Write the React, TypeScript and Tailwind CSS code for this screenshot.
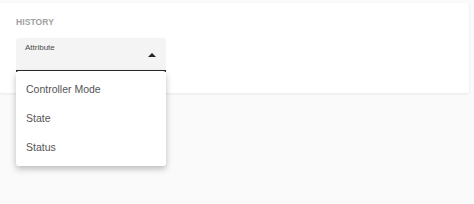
import React from "react";

const items = ["Controller Mode", "State", "Status"];

export default function App() {
  return (
    <div
      className="relative flex h-[204px] w-[474px] flex-col overflow-hidden bg-[#fafafa] pt-[3px]"
      style={{ fontFamily: "'Liberation Sans', Arial, sans-serif" }}
    >
      <div className="flex h-[90px] w-[469px] flex-col items-start gap-[11px] rounded-[2px] bg-white px-4 pt-[14px] shadow-[0_1px_3px_rgba(0,0,0,0.08)]">
        <div className="text-[8.5px] font-bold leading-[10px] tracking-[0.1px] text-[#a0a0a0]">HISTORY</div>
        <div className="flex h-[34px] w-[150px] items-start justify-between rounded-t-[3px] border-b-2 border-[#2b2b2b] bg-[#f4f4f4] pl-[9px] pr-[10px] pt-[5px]">
          <span className="text-[8px] leading-[10px] text-[#4a4a4a]">Attribute</span>
          <span className="mt-[10px] h-0 w-0 border-x-[4px] border-b-[4px] border-x-transparent border-b-[#222]"></span>
        </div>
      </div>
      <div className="absolute left-4 top-[71px] flex w-[150px] flex-col rounded-[3px] bg-white py-[4px] shadow-[0_3px_6px_rgba(0,0,0,0.25)]">
        {items.map((t) => (
          <div key={t} className="flex h-[29px] items-center pl-[10px] text-[10.5px] text-[#555]">
            {t}
          </div>
        ))}
      </div>
    </div>
  );
}
